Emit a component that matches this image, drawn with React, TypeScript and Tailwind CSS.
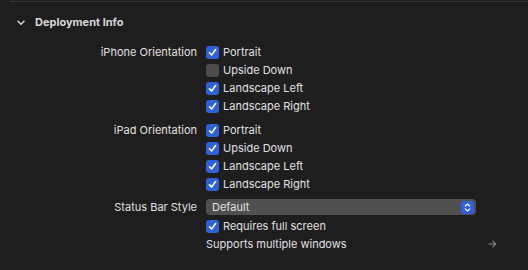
import React from 'react';

type Opt = { label: string; checked: boolean };

const iphone: Opt[] = [
  { label: 'Portrait', checked: true },
  { label: 'Upside Down', checked: false },
  { label: 'Landscape Left', checked: true },
  { label: 'Landscape Right', checked: true },
];

const ipad: Opt[] = [
  { label: 'Portrait', checked: true },
  { label: 'Upside Down', checked: true },
  { label: 'Landscape Left', checked: true },
  { label: 'Landscape Right', checked: true },
];

function Checkbox({ checked }: { checked: boolean }) {
  if (!checked) {
    return <div className="w-[13px] h-[13px] rounded-[3px] bg-[#4b4b4b] shrink-0" />;
  }
  return (
    <div className="w-[13px] h-[13px] rounded-[3px] bg-[#2f62d8] shrink-0 flex items-center justify-center">
      <svg width="9" height="9" viewBox="0 0 9 9" fill="none">
        <path d="M1.5 4.8 L3.6 7 L7.6 1.6" stroke="white" strokeWidth="1.6" strokeLinecap="round" strokeLinejoin="round" />
      </svg>
    </div>
  );
}

function CheckRow({ opt }: { opt: Opt }) {
  return (
    <div className="h-[18px] flex items-center gap-[4px]">
      <Checkbox checked={opt.checked} />
      <span>{opt.label}</span>
    </div>
  );
}

function Group({ label, opts }: { label: string; opts: Opt[] }) {
  return (
    <div className="flex">
      <div className="w-[197px] h-[18px] flex items-center justify-end">{label}</div>
      <div className="ml-[9px] flex flex-col">
        {opts.map((o) => (
          <CheckRow key={o.label} opt={o} />
        ))}
      </div>
    </div>
  );
}

export default function App() {
  return (
    <div
      className="w-[528px] h-[270px] bg-[#1e1e1e] text-[#e0e0e0] text-[11px] overflow-hidden"
      style={{ fontFamily: 'Inter, "Liberation Sans", sans-serif' }}
    >
      <div className="ml-[10px] mt-[1px] h-px bg-[#363636]" />
      <div className="h-[29px] mt-[8px] flex items-center gap-[10px] pl-[17px] pb-[4px]">
        <svg width="8" height="6" viewBox="0 0 8 6" fill="none">
          <path d="M1 1.2 L4 4.2 L7 1.2" stroke="#d8d8d8" strokeWidth="1.5" strokeLinecap="round" strokeLinejoin="round" />
        </svg>
        <span className="font-bold text-[#d6d6d6]">Deployment Info</span>
      </div>
      <div className="mt-[4px] flex flex-col">
        <Group label="iPhone Orientation" opts={iphone} />
        <div className="h-[6px]" />
        <Group label="iPad Orientation" opts={ipad} />
        <div className="h-[5px]" />
        <div className="flex h-[18px] items-center">
          <div className="w-[197px] flex justify-end">Status Bar Style</div>
          <div className="ml-[9px] w-[270px] h-[16px] rounded-[4px] bg-[#505050] flex items-center justify-between pl-[6px] pr-[2px]">
            <span>Default</span>
            <div className="w-[13px] h-[13px] rounded-[3px] bg-[#3260dc] flex items-center justify-center">
              <svg width="7" height="9" viewBox="0 0 7 9" fill="none">
                <path d="M1.2 3.2 L3.5 1 L5.8 3.2 M1.2 5.8 L3.5 8 L5.8 5.8" stroke="white" strokeWidth="1.1" strokeLinecap="round" strokeLinejoin="round" />
              </svg>
            </div>
          </div>
        </div>
        <div className="flex h-[18px] items-center mt-[1px]">
          <div className="w-[206px]" />
          <CheckRow opt={{ label: 'Requires full screen', checked: true }} />
        </div>
        <div className="flex h-[18px] items-center">
          <div className="w-[206px]" />
          <span>Supports multiple windows</span>
          <svg className="ml-auto mr-[31px]" width="9" height="8" viewBox="0 0 9 8" fill="none">
            <path d="M0.8 4 H7.6 M4.8 1.2 L7.6 4 L4.8 6.8" stroke="#8a8a8a" strokeWidth="1.1" strokeLinecap="round" strokeLinejoin="round" />
          </svg>
        </div>
      </div>
    </div>
  );
}
